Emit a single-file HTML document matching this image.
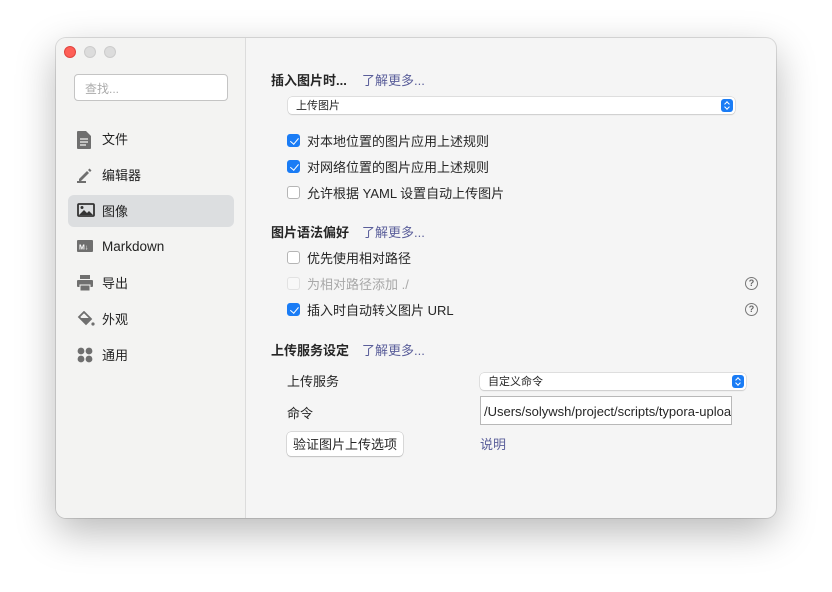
<!DOCTYPE html>
<html><head><meta charset="utf-8"><style>
*{margin:0;padding:0;box-sizing:border-box}
body{width:832px;height:592px;background:#fff;font-family:"Liberation Sans","Noto Sans CJK SC",sans-serif;font-size:13px;line-height:16px;color:#262626;position:relative;overflow:hidden}
.win{position:absolute;left:56px;top:38px;width:720px;height:480px;border-radius:10px;background:#f5f5f5;box-shadow:0 14px 40px rgba(0,0,0,.28),0 0 0 1px rgba(0,0,0,.12);overflow:hidden}
.side{position:absolute;left:0;top:0;width:190px;height:480px;background:#f3f3f2;border-right:1px solid #dcdcdc}
.dot{position:absolute;top:8px;width:12px;height:12px;border-radius:50%}
.a{position:absolute;white-space:nowrap;margin-top:2px}
.b{position:absolute;white-space:nowrap}
.search{position:absolute;left:18px;top:36px;width:154px;height:27px;border:1px solid #c4c4c4;border-radius:4px;background:#fff;color:#aaa;padding:6px 10px;font-size:12px}
.item{position:absolute;left:12px;width:166px;height:32px;border-radius:6px}
.item span{position:absolute;left:34px;top:9px;font-size:13px;color:#222}
.item svg{position:absolute;left:9px;top:8px}
.cb{position:absolute;width:13px;height:13px;border-radius:3px;border:1px solid #b5b5b5;background:#fff}
.cb.on{background:#1a7cf5;border-color:#1a7cf5}
.cb.on:after{content:"";position:absolute;left:3.5px;top:1px;width:3.5px;height:7px;border:solid #fff;border-width:0 1.8px 1.8px 0;transform:rotate(40deg)}
.cb.dis{border-color:#e2e2e2;background:#f8f8f8}
.h{font-weight:bold;font-size:13px}
.lk{color:#5a5e9a}
.sel{position:absolute;height:17px;background:#fff;border-radius:4px;box-shadow:0 0 0 .5px #c8c8c8,0 1px 1px rgba(0,0,0,.15);font-size:11px;line-height:15px;padding:2px 8px 0}
.sel i{position:absolute;right:2px;top:2px;width:12px;height:13px;border-radius:3px;background:#1a7cf5}
.sel i:before,.sel i:after{content:"";position:absolute;left:4px;width:3px;height:3px;border:solid #fff;border-width:1.2px 0 0 1.2px}
.sel i:before{top:3px;transform:rotate(45deg)}
.sel i:after{top:6px;transform:rotate(225deg)}
.q{position:absolute;width:13px;height:13px;border:1.2px solid #777;border-radius:50%;font-size:9px;text-align:center;line-height:11px;color:#666;font-weight:bold}
</style></head><body>
<div class="win">
<div class="side">
<div class="dot" style="left:8px;background:#fe5f57;border:1px solid #e0443e"></div>
<div class="dot" style="left:28px;background:#dcdcdc;border:1px solid #ccc"></div>
<div class="dot" style="left:48px;background:#dcdcdc;border:1px solid #ccc"></div>
<div class="search">查找...</div>
<div class="item" style="top:85px"><svg width="14" height="18" viewBox="0 0 14 18"><path d="M1 0h8l5 5v12a1 1 0 0 1-1 1H1a1 1 0 0 1-1-1V1a1 1 0 0 1 1-1z" fill="#6f6f6f"/><path d="M3 8h8M3 11h8M3 14h6" stroke="#f3f3f2" stroke-width="1.3"/></svg><span>文件</span></div>
<div class="item" style="top:121px"><svg width="16" height="16" viewBox="0 0 16 16"><path d="M2 12l8-8 2 2-8 8H2z M11 3l1.5-1.5 2 2L13 5z" fill="#6f6f6f"/><rect x="0" y="14" width="9" height="2" fill="#6f6f6f"/></svg><span>编辑器</span></div>
<div class="item" style="top:157px;background:#dcdee0"><svg width="18" height="14" viewBox="0 0 18 14"><rect x="1" y="1" width="16" height="12" rx="1" fill="none" stroke="#333" stroke-width="1.8"/><path d="M2 12l5-5 3 3 2-2 4 4z" fill="#333"/><circle cx="5" cy="4.5" r="1.5" fill="#333"/></svg><span>图像</span></div>
<div class="item" style="top:193px"><svg width="16" height="14" viewBox="0 0 16 14"><rect x="0" y="1" width="16" height="12" rx="1" fill="#6f6f6f"/><text x="2" y="10.5" font-size="7" fill="#fff" font-family="Liberation Sans" font-weight="bold">M↓</text></svg><span style="font-size:13.5px;top:8px">Markdown</span></div>
<div class="item" style="top:229px"><svg width="16" height="16" viewBox="0 0 16 16"><rect x="3" y="0" width="10" height="4" fill="#6f6f6f"/><rect x="0" y="5" width="16" height="7" rx="1" fill="#6f6f6f"/><rect x="3" y="10" width="10" height="6" fill="#6f6f6f" stroke="#f3f3f2"/></svg><span>导出</span></div>
<div class="item" style="top:265px"><svg width="18" height="16" viewBox="0 0 18 16"><path d="M7 1l7 7-5 5-7-7z" fill="none" stroke="#6f6f6f" stroke-width="1.8"/><path d="M3 7h11l-5 5z" fill="#6f6f6f"/><circle cx="16" cy="13" r="1.6" fill="#6f6f6f"/></svg><span>外观</span></div>
<div class="item" style="top:301px"><svg width="16" height="16" viewBox="0 0 16 16" fill="#6f6f6f"><circle cx="4" cy="4" r="3.4"/><circle cx="12" cy="4" r="3.4"/><circle cx="4" cy="12" r="3.4"/><circle cx="12" cy="12" r="3.4"/></svg><span>通用</span></div>
</div>

<div class="a h" style="left:215px;top:33px">插入图片时...</div>
<div class="a lk" style="left:306px;top:33px">了解更多...</div>
<div class="sel" style="left:232px;top:59px;width:447px">上传图片<i></i></div>
<div class="cb on" style="left:231px;top:96px"></div><div class="a" style="left:251px;top:94px">对本地位置的图片应用上述规则</div>
<div class="cb on" style="left:231px;top:122px"></div><div class="a" style="left:251px;top:120px">对网络位置的图片应用上述规则</div>
<div class="cb" style="left:231px;top:148px"></div><div class="a" style="left:251px;top:146px">允许根据 YAML 设置自动上传图片</div>

<div class="a h" style="left:215px;top:185px">图片语法偏好</div>
<div class="a lk" style="left:306px;top:185px">了解更多...</div>
<div class="cb" style="left:231px;top:213px"></div><div class="a" style="left:251px;top:211px">优先使用相对路径</div>
<div class="cb dis" style="left:231px;top:239px"></div><div class="a" style="left:251px;top:237px;color:#a8a8a8">为相对路径添加 ./</div>
<div class="q" style="left:689px;top:239px">?</div>
<div class="cb on" style="left:231px;top:265px"></div><div class="a" style="left:251px;top:263px">插入时自动转义图片 URL</div>
<div class="q" style="left:689px;top:265px">?</div>

<div class="a h" style="left:215px;top:303px">上传服务设定</div>
<div class="a lk" style="left:306px;top:303px">了解更多...</div>
<div class="a" style="left:231px;top:334px">上传服务</div>
<div class="sel" style="left:424px;top:335px;width:266px">自定义命令<i></i></div>
<div class="a" style="left:231px;top:366px">命令</div>
<div class="b" style="left:424px;top:358px;width:252px;height:29px;background:#fff;border:1px solid #b8b8b8;padding:7px 3px 0;overflow:hidden">/Users/solywsh/project/scripts/typora-upload</div>
<div class="b" style="left:231px;top:394px;width:116px;height:24px;background:#fff;border-radius:4px;box-shadow:0 0 0 .5px #bbb,0 1px 1px rgba(0,0,0,.2);padding:5px 0 0;text-align:center">验证图片上传选项</div>
<div class="a lk" style="left:424px;top:397px">说明</div>
</div>
</body></html>
